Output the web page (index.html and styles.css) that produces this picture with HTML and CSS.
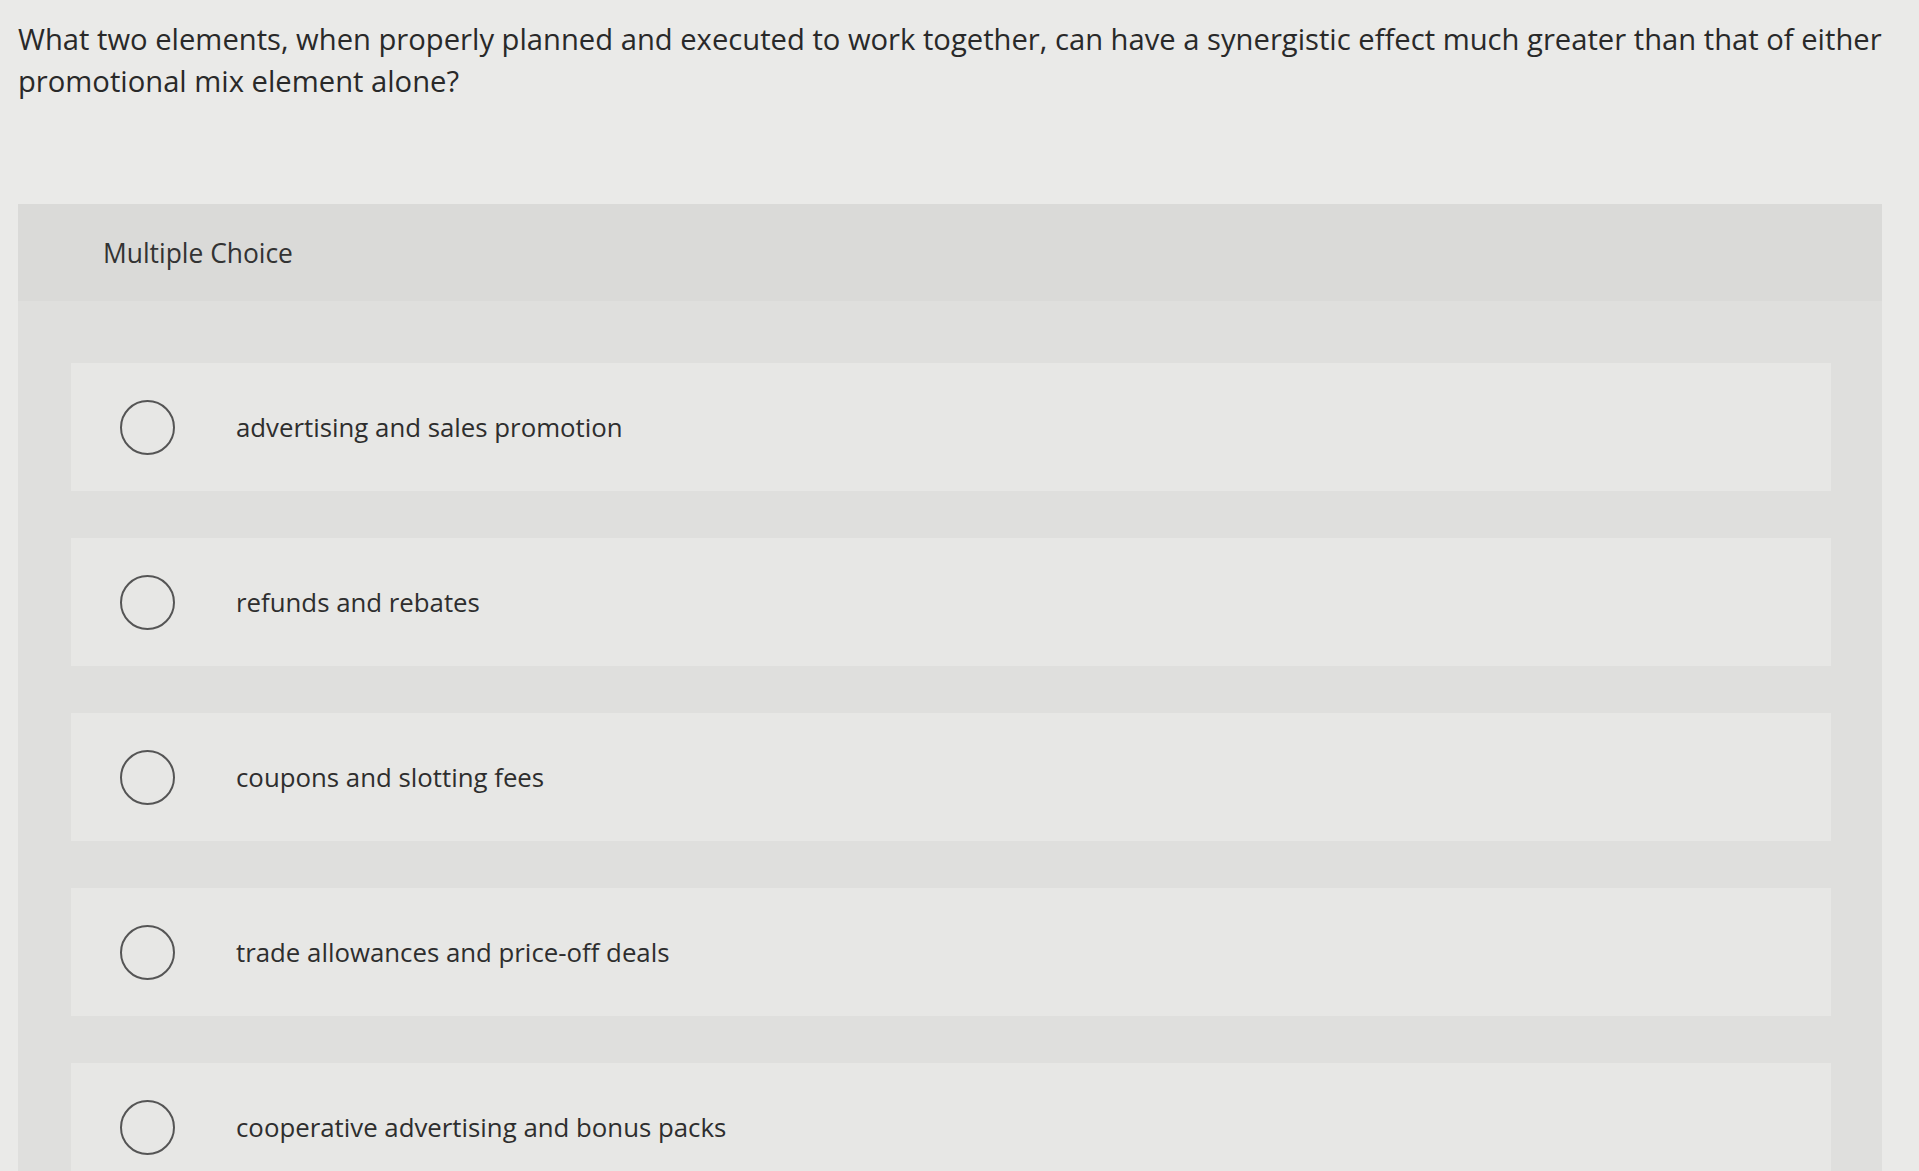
FILE: index.html
```html
<!DOCTYPE html>
<html lang="en">
<head>
    <meta charset="UTF-8">
    <meta name="viewport" content="width=device-width, initial-scale=1.0">
    <title>Multiple Choice</title>
    <link rel="stylesheet" href="styles.css">
</head>
<body>
    <div class="question">
        What two elements, when properly planned and executed to work together, can have a synergistic effect much greater than that of either promotional mix element alone?
    </div>

    <div class="panel">
        <div class="panel-header">Multiple Choice</div>

        <div class="choices">
            <!-- answer options -->
            <label class="choice">
                <span class="radio"></span>
                <span class="choice-text">advertising and sales promotion</span>
            </label>
            <label class="choice">
                <span class="radio"></span>
                <span class="choice-text">refunds and rebates</span>
            </label>
            <label class="choice">
                <span class="radio"></span>
                <span class="choice-text">coupons and slotting fees</span>
            </label>
            <label class="choice">
                <span class="radio"></span>
                <span class="choice-text">trade allowances and price-off deals</span>
            </label>
            <label class="choice">
                <span class="radio"></span>
                <span class="choice-text">cooperative advertising and bonus packs</span>
            </label>
        </div>
    </div>
</body>
</html>
```

FILE: styles.css
```css
:root {
    --page-bg: #eaeae8;
    --header-bg: #dadad8;
    --panel-bg: #dfdfdd;
    --row-bg: #e7e7e5;
    --text-color: #292929;
}

body {
    margin: 0;
    background: var(--page-bg);
    font-family: "Open Sans", Lato, sans-serif;
    color: var(--text-color);
    overflow: hidden;
}

.question {
    padding: 18px 11px 0 18px;
    font-size: 29.2px;
    line-height: 42px;
}

.panel {
    width: 1864px;
    margin: 102px 0 0 18px;
    background: var(--panel-bg);
}

.panel-header {
    height: 97px;
    padding-left: 85px;
    display: flex;
    align-items: center;
    background: var(--header-bg);
    font-size: 26.4px;
    color: #333;
}

.choices {
    padding: 62px 51px 0 53px;
}

.choice {
    height: 128px;
    margin-bottom: 47px;
    padding-left: 49px;
    display: flex;
    align-items: center;
    background: var(--row-bg);
    cursor: pointer;
}

.radio {
    width: 51px;
    height: 51px;
    border: 2px solid #555;
    border-radius: 50%;
    flex-shrink: 0;
}

.choice-text {
    margin-left: 61px;
    font-size: 25.8px;
    color: #2e2e2e;
}
```
